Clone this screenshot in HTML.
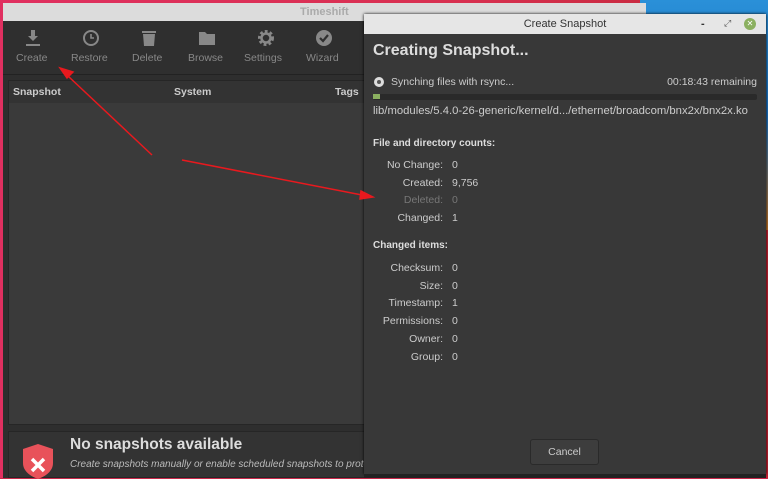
<!DOCTYPE html>
<html><head><style>
*{margin:0;padding:0;box-sizing:border-box}
body{width:768px;height:478px;overflow:hidden;position:relative;background:#c8284a;font-family:"Liberation Sans",sans-serif;font-size:10px;color:#ddd}
.abs{position:absolute}
</style></head><body>
<div class="abs" style="left:0;top:0;width:768px;height:478px;background:linear-gradient(90deg,#e03060 0%,#d83050 60%,#c02838 100%)"></div>
<div class="abs" style="left:640px;top:0;width:128px;height:230px;background:linear-gradient(180deg,#2a90d8,#1a70c0 50%,#c07020)"></div>
<div class="abs" style="left:640px;top:230px;width:128px;height:248px;background:#c02030"></div>
<div class="abs" style="left:3px;top:3px;width:643px;height:475px;background:#2e2e2e">
 <div class="abs" style="left:0;top:0;width:643px;height:18px;background:#dcdcdc;color:#aaa;font-weight:bold;font-size:11px;line-height:18px"><span class="abs" style="left:297px">Timeshift</span></div>
 <div class="abs" style="left:0;top:18px;width:643px;height:54px;background:#2f2f2f;border-bottom:1px solid #222"></div>
</div>
<div class="abs" style="left:8px;top:32px;width:360px;height:40px;color:#888;font-size:10.5px">
 <svg class="abs" style="left:16px;top:-3px" width="18" height="18" viewBox="0 0 18 18"><path d="M7 1h4v6h3l-5 5-5-5h3z M2 15h14v2H2z" fill="#888"/></svg>
 <span class="abs" style="left:8px;top:20px">Create</span>
 <svg class="abs" style="left:74px;top:-3px" width="18" height="18" viewBox="0 0 18 18"><circle cx="9" cy="9" r="7" fill="none" stroke="#888" stroke-width="2"/><path d="M9 5v4h3" stroke="#888" stroke-width="1.6" fill="none"/></svg>
 <span class="abs" style="left:63px;top:20px">Restore</span>
 <svg class="abs" style="left:132px;top:-3px" width="18" height="18" viewBox="0 0 18 18"><path d="M2 2h14v2H2z M3 5h12l-1 12H4z" fill="#888"/></svg>
 <span class="abs" style="left:124px;top:20px">Delete</span>
 <svg class="abs" style="left:190px;top:-3px" width="18" height="18" viewBox="0 0 18 18"><path d="M1 3h6l2 2h8v11H1z" fill="#888"/></svg>
 <span class="abs" style="left:180px;top:20px">Browse</span>
 <svg class="abs" style="left:249px;top:-3px" width="18" height="18" viewBox="0 0 18 18"><circle cx="9" cy="9" r="6" fill="none" stroke="#888" stroke-width="4" stroke-dasharray="2.5 2"/><circle cx="9" cy="9" r="4.5" fill="none" stroke="#888" stroke-width="2.5"/></svg>
 <span class="abs" style="left:236px;top:20px">Settings</span>
 <svg class="abs" style="left:307px;top:-3px" width="18" height="18" viewBox="0 0 18 18"><circle cx="9" cy="9" r="8" fill="#888"/><path d="M5 9l3 3 5-6" stroke="#2f2f2f" stroke-width="2.2" fill="none"/></svg>
 <span class="abs" style="left:298px;top:20px">Wizard</span>
</div>
<div class="abs" style="left:8px;top:80px;width:360px;height:345px;background:#3a3a3a;border:1px solid #262626"></div>
<div class="abs" style="left:9px;top:81px;width:359px;height:22px;background:#333;font-weight:bold;color:#ccc;font-size:10.5px;line-height:22px">
 <span class="abs" style="left:4px">Snapshot</span><span class="abs" style="left:165px">System</span><span class="abs" style="left:326px">Tags</span>
</div>
<div class="abs" style="left:8px;top:431px;width:360px;height:47px;background:#333;border:1px solid #262626"></div>
<svg class="abs" style="left:20px;top:443px" width="36" height="36" viewBox="0 0 36 36"><path d="M18 1l15 5v14c0 8-7 13-15 16C10 33 3 28 3 20V6z" fill="#e8525a"/><path d="M12 16l12 12M24 16L12 28" stroke="#fff" stroke-width="3.5"/></svg>
<div class="abs" style="left:70px;top:436px;font-size:15.5px;font-weight:bold;color:#ddd">No snapshots available</div>
<div class="abs" style="left:70px;top:459px;font-size:10px;font-style:italic;color:#bbb;white-space:nowrap;width:298px;overflow:hidden">Create snapshots manually or enable scheduled snapshots to protect your system</div>
<div class="abs" style="left:364px;top:14px;width:402px;height:460px;background:#383838;box-shadow:0 0 3px #000"></div>
<div class="abs" style="left:364px;top:474px;width:402px;height:4px;background:#222"></div>
<div class="abs" style="left:364px;top:14px;width:402px;height:20px;background:#e6e6e6;color:#333;font-size:11px;text-align:center;line-height:20px">Create Snapshot
 <span class="abs" style="left:337px;top:0;color:#333;font-weight:bold">-</span>
 <span class="abs" style="left:360px;top:-1px;color:#555;font-size:9px">⤢</span>
 <span class="abs" style="left:380px;top:4px;width:12px;height:12px;border-radius:6px;background:#8bb060;color:#fff;font-size:8px;line-height:12px">✕</span>
</div>
<div class="abs" style="left:373px;top:42px;font-size:16px;font-weight:bold;color:#ddd">Creating Snapshot...</div>
<div class="abs" style="left:374px;top:77px;width:10px;height:10px;border-radius:5px;background:#ddd;border:3px solid #ddd"><div style="width:4px;height:4px;background:#555;border-radius:2px"></div></div>
<div class="abs" style="left:391px;top:76px;font-size:10.5px;color:#ccc">Synching files with rsync...</div>
<div class="abs" style="left:757px;top:76px;font-size:10.5px;color:#ccc;transform:translateX(-100%);white-space:nowrap">00:18:43 remaining</div>
<div class="abs" style="left:373px;top:94px;width:384px;height:6px;background:#2a2a2a;border-radius:2px"><div style="width:7px;height:5px;background:#8bb060"></div></div>
<div class="abs" style="left:373px;top:105px;font-size:11.3px;color:#ccc;white-space:nowrap">lib/modules/5.4.0-26-generic/kernel/d.../ethernet/broadcom/bnx2x/bnx2x.ko</div>
<div class="abs" style="left:373px;top:138px;font-size:10px;font-weight:bold;color:#ddd">File and directory counts:</div>
<div class="abs" style="left:350px;top:157px;width:93px;text-align:right;font-size:10.5px;color:#ccc;line-height:17.7px">No Change:<br>Created:<br><span style="color:#777">Deleted:</span><br>Changed:</div>
<div class="abs" style="left:452px;top:157px;font-size:10.5px;color:#ccc;line-height:17.7px">0<br>9,756<br><span style="color:#777">0</span><br>1</div>
<div class="abs" style="left:373px;top:240px;font-size:10px;font-weight:bold;color:#ddd">Changed items:</div>
<div class="abs" style="left:350px;top:260px;width:93px;text-align:right;font-size:10.5px;color:#ccc;line-height:17.7px">Checksum:<br>Size:<br>Timestamp:<br>Permissions:<br>Owner:<br>Group:</div>
<div class="abs" style="left:452px;top:260px;font-size:10.5px;color:#ccc;line-height:17.7px">0<br>0<br>1<br>0<br>0<br>0</div>
<div class="abs" style="left:530px;top:439px;width:69px;height:26px;background:#3d3d3d;border:1px solid #2a2a2a;border-radius:3px;font-size:10.5px;color:#ccc;text-align:center;line-height:24px">Cancel</div>
<svg class="abs" style="left:0;top:0" width="768" height="478"><g stroke="#e8191e" stroke-width="1.5" fill="#e8191e"><line x1="152" y1="155" x2="68" y2="76"/><path d="M60 68l13 4-6 6z"/><line x1="182" y1="160" x2="362" y2="195"/><path d="M373 197l-12-6-1 8z"/></g></svg>
</body></html>
